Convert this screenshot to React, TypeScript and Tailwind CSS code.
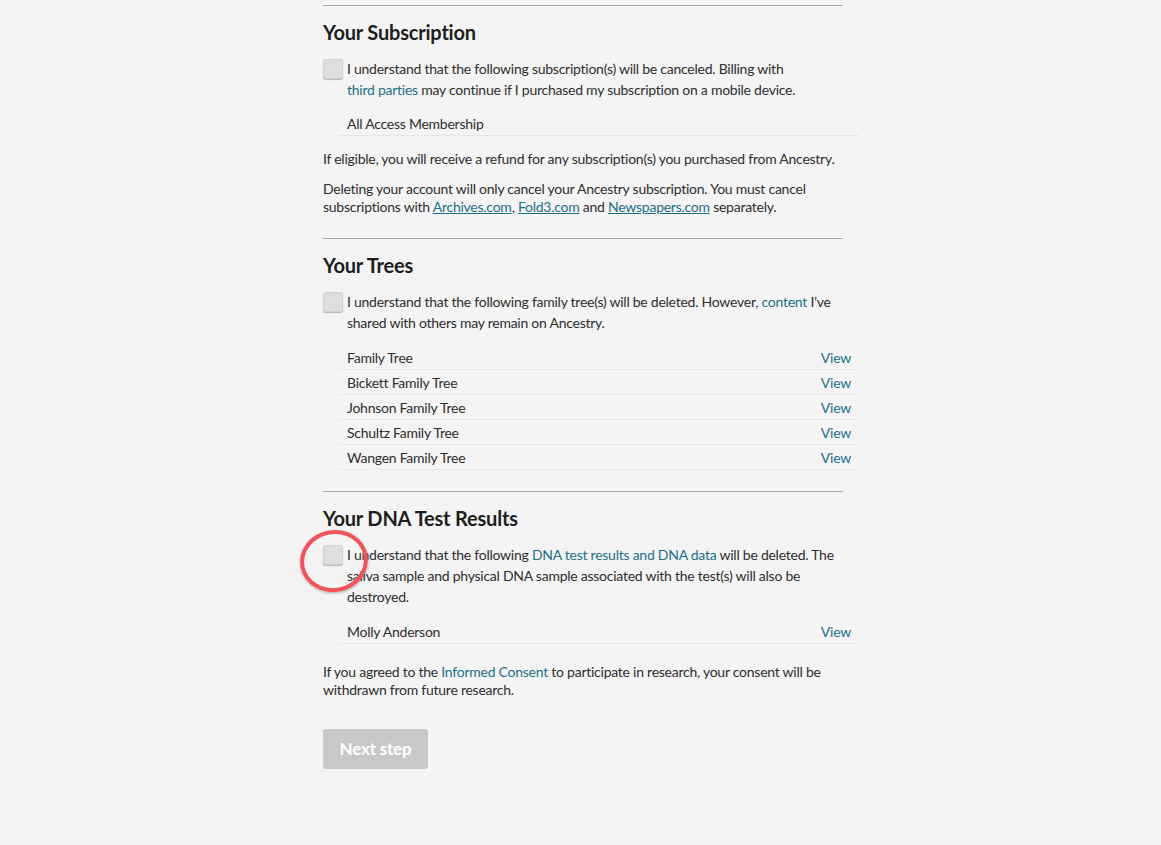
import React from "react";

const link = "text-[#1d6f8a]";

function Checkbox() {
  return (
    <span className="mt-[1px] h-5 w-5 shrink-0 rounded-[3px] border border-[#d2d2d2] bg-[#dedede] shadow-[0_1px_1px_rgba(0,0,0,0.25)]" />
  );
}

function Row({ name, view = false }: { name: string; view?: boolean }) {
  return (
    <li className="flex h-[25px] items-center justify-between border-b border-[#e6e6e6] pl-2 pr-2">
      <span>{name}</span>
      {view && <a className={link}>View</a>}
    </li>
  );
}

function Agree({ children }: { children: React.ReactNode }) {
  return (
    <label className="flex gap-1 leading-[21px]">
      <Checkbox />
      <span>{children}</span>
    </label>
  );
}

export default function App() {
  return (
    <div className="min-h-[845px] bg-[#f4f4f4] pl-[5px] font-['Lato','Noto_Sans',sans-serif] text-[14px] tracking-[-0.25px] text-[#2e2e2e]">
      <div className="mx-auto w-[520px] pt-[5px]">
        <section className="border-t border-[#a8a8a8] pt-[14px]">
          <h2 className="text-[20px] font-bold leading-6 tracking-[-0.2px] text-[#1e1e1e]">Your Subscription</h2>
          <div className="mt-[14px] pr-[40px]">
            <Agree>
              I understand that the following subscription(s) will be canceled. Billing with{" "}
              <a className={link}>third parties</a> may continue if I purchased my subscription on a mobile device.
            </Agree>
          </div>
          <ul className="ml-4 mr-[-16px] mt-[11px]">
            <Row name="All Access Membership" />
          </ul>
          <p className="mt-[14px] leading-[18px]">
            If eligible, you will receive a refund for any subscription(s) you purchased from Ancestry.
          </p>
          <p className="mt-[12px] pr-[20px] leading-[18px]">
            Deleting your account will only cancel your Ancestry subscription. You must cancel subscriptions with{" "}
            <a className={`${link} underline`}>Archives.com</a>, <a className={`${link} underline`}>Fold3.com</a> and{" "}
            <a className={`${link} underline`}>Newspapers.com</a> separately.
          </p>
        </section>

        <section className="mt-[22px] border-t border-[#a8a8a8] pt-[14px]">
          <h2 className="text-[20px] font-bold leading-6 tracking-[-0.2px] text-[#1e1e1e]">Your Trees</h2>
          <div className="mt-[14px]">
            <Agree>
              I understand that the following family tree(s) will be deleted. However, <a className={link}>content</a> I’ve
              shared with others may remain on Ancestry.
            </Agree>
          </div>
          <ul className="ml-4 mr-[-16px] mt-[12px]">
            <Row name="Family Tree" view />
            <Row name="Bickett Family Tree" view />
            <Row name="Johnson Family Tree" view />
            <Row name="Schultz Family Tree" view />
            <Row name="Wangen Family Tree" view />
          </ul>
        </section>

        <section className="mt-[21px] border-t border-[#a8a8a8] pt-[14px]">
          <h2 className="text-[20px] font-bold leading-6 tracking-[-0.2px] text-[#1e1e1e]">Your DNA Test Results</h2>
          <div className="relative mt-[14px]">
            <Agree>
              I understand that the following <a className={link}>DNA test results and DNA data</a> will be deleted. The
              saliva sample and physical DNA sample associated with the test(s) will also be destroyed.
            </Agree>
            <span className="pointer-events-none absolute left-[-23px] top-[-14px] h-[62px] w-[68px] rotate-[-10deg] rounded-[50%] border-[4px] border-[#f0545a] shadow-[0_1px_3px_rgba(0,0,0,0.3)]" />
          </div>
          <ul className="ml-4 mr-[-16px] mt-[12px]">
            <Row name="Molly Anderson" view />
          </ul>
          <p className="mt-[19px] leading-[18px]">
            If you agreed to the <a className={link}>Informed Consent</a> to participate in research, your consent will be
            withdrawn from future research.
          </p>
        </section>

        <button
          disabled
          className="mt-[30px] h-10 w-[105px] rounded-[3px] bg-[#c8c8c8] text-[17px] font-bold tracking-[-0.2px] text-white"
        >
          Next step
        </button>
      </div>
    </div>
  );
}
